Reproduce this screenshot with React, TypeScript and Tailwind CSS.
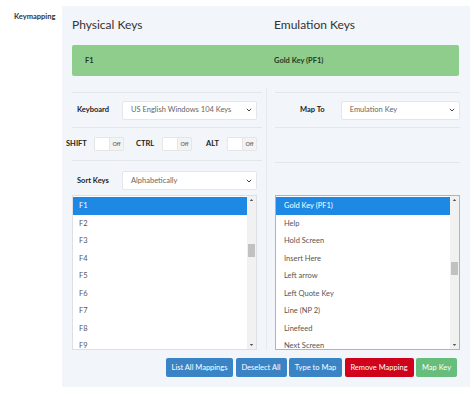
import type { ReactNode } from "react";

const LEFT_KEYS = ["F1", "F2", "F3", "F4", "F5", "F6", "F7", "F8", "F9"];
const RIGHT_KEYS = [
  "Gold Key (PF1)",
  "Help",
  "Hold Screen",
  "Insert Here",
  "Left arrow",
  "Left Quote Key",
  "Line (NP 2)",
  "Linefeed",
  "Next Screen",
];

function Chevron() {
  return (
    <svg width="6" height="4" viewBox="0 0 6 4" className="shrink-0">
      <path d="M0.8 0.8 L3 3 L5.2 0.8" fill="none" stroke="#444" strokeWidth="1" />
    </svg>
  );
}

function Select({ value, width }: { value: string; width: string }) {
  return (
    <div
      className={`${width} flex h-[19px] items-center justify-between rounded-[2px] border border-[#e3e6ea] bg-white pl-[8px] pr-[4px] text-[7.5px] text-[#666]`}
    >
      <span>{value}</span>
      <Chevron />
    </div>
  );
}

function Toggle() {
  return (
    <div className="flex h-[14px] w-[30px] overflow-hidden rounded-[1px] border border-[#e6e6e6] bg-white">
      <div className="w-[14px] bg-white" />
      <div className="flex flex-1 items-center justify-center border-l border-[#e6e6e6] bg-[#f3f3f3] text-[5.5px] text-[#777]">
        Off
      </div>
    </div>
  );
}

function Scrollbar({ thumbTop }: { thumbTop: string }) {
  return (
    <div className="relative h-full w-[9px] shrink-0 bg-[#f1f1f1]">
      <svg width="9" height="8" viewBox="0 0 9 8" className="absolute left-0 top-0">
        <path d="M2.8 5 L4.5 3 L6.2 5 Z" fill="#505050" />
      </svg>
      <div className={`absolute left-[1px] ${thumbTop} h-[13px] w-[7px] bg-[#c1c1c1]`} />
      <svg width="9" height="8" viewBox="0 0 9 8" className="absolute bottom-0 left-0">
        <path d="M2.8 3 L4.5 5 L6.2 3 Z" fill="#505050" />
      </svg>
    </div>
  );
}

function ListBox({
  items,
  border,
  pad,
  thumbTop,
}: {
  items: string[];
  border: string;
  pad: string;
  thumbTop: string;
}) {
  return (
    <div className={`flex h-[155px] overflow-hidden border ${border} bg-white`}>
      <div className="flex-1 pt-[1px]">
        {items.map((item, i) => (
          <div
            key={item}
            className={`flex h-[17.5px] items-center ${pad} text-[7.5px] ${
              i === 0 ? "bg-[#1e88e5] text-white" : "text-[#555]"
            }`}
          >
            {item}
          </div>
        ))}
      </div>
      <Scrollbar thumbTop={thumbTop} />
    </div>
  );
}

function Btn({ children, className }: { children: ReactNode; className: string }) {
  return (
    <button
      className={`flex h-[19px] items-center justify-center rounded-[2px] text-[7.5px] text-white ${className}`}
    >
      {children}
    </button>
  );
}

export default function App() {
  return (
    <div
      className="flex h-[396px] w-[474px] bg-white text-[#333]"
      style={{ fontFamily: "Lato, 'Open Sans', sans-serif" }}
    >
      <div className="w-[62px] shrink-0 pl-[14px] pt-[11px] text-[7.5px] font-bold text-[#333]">
        Keymapping
      </div>

      <div className="mt-[6px] h-[381px] w-[408px] bg-[#f2f5f9] px-[10px] pt-[4px]">
        <div className="mb-[5px] flex h-[30px] items-center text-[12px] text-[#333]">
          <div className="w-[202px]">Physical Keys</div>
          <div>Emulation Keys</div>
        </div>

        <div className="flex h-[31px] w-[387px] items-center rounded-[2px] bg-[#8fcd8c] text-[7.5px] font-bold text-[#1f3a1f]">
          <div className="w-[202px] pl-[13px]">F1</div>
          <div>Gold Key (PF1)</div>
        </div>

        <div className="mt-[12px] flex">
          <div className="w-[194px] pr-[4px] pt-[4px]">
            <div className="flex h-[35px] items-center border-t border-[#e3e7ec]">
              <div className="w-[50px] pl-[5px] text-[7.5px] font-bold text-[#222]">Keyboard</div>
              <Select value="US English Windows 104 Keys" width="w-[135px]" />
            </div>
            <div className="flex h-[33px] items-center border-t border-[#e3e7ec] text-[7.5px] font-bold text-[#222]">
              <div className="ml-[-6px] w-[28px]">SHIFT</div>
              <Toggle />
              <div className="ml-[12px] w-[26px]">CTRL</div>
              <Toggle />
              <div className="ml-[14px] w-[21px]">ALT</div>
              <Toggle />
            </div>
            <div className="border-t border-[#e3e7ec] pt-[10px]">
              <div className="flex items-center">
                <div className="w-[50px] pl-[5px] text-[7.5px] font-bold text-[#222]">Sort Keys</div>
                <Select value="Alphabetically" width="w-[135px]" />
              </div>
              <div className="mt-[5px] w-[185px]">
                <ListBox
                  items={LEFT_KEYS}
                  border="border-[#dcdfe3]"
                  pad="pl-[6px]"
                  thumbTop="top-[48px]"
                />
              </div>
            </div>
          </div>

          <div className="w-[194px] border-l border-[#e6eaef] pl-[8px] pt-[4px]">
            <div className="flex h-[35px] items-center border-t border-[#e3e7ec]">
              <div className="w-[66px] pl-[25px] text-[7.5px] font-bold text-[#222]">Map To</div>
              <Select value="Emulation Key" width="w-[120px]" />
            </div>
            <div className="h-[35px] border-t border-[#e3e7ec]" />
            <div className="border-t border-[#e3e7ec] pt-[32px]">
              <ListBox
                items={RIGHT_KEYS}
                border="border-[#8fcd8c]"
                pad="pl-[8px]"
                thumbTop="top-[66px]"
              />
            </div>
          </div>
        </div>

        <div className="mt-[8px] flex justify-end gap-[2.5px] pr-[3px]">
          <Btn className="w-[67px] bg-[#3a84c6]">List All Mappings</Btn>
          <Btn className="w-[51px] bg-[#3a84c6]">Deselect All</Btn>
          <Btn className="w-[53px] bg-[#3a84c6]">Type to Map</Btn>
          <Btn className="w-[69px] bg-[#d0021b]">Remove Mapping</Btn>
          <Btn className="w-[41px] bg-[#66bd7c]">Map Key</Btn>
        </div>
      </div>
    </div>
  );
}
